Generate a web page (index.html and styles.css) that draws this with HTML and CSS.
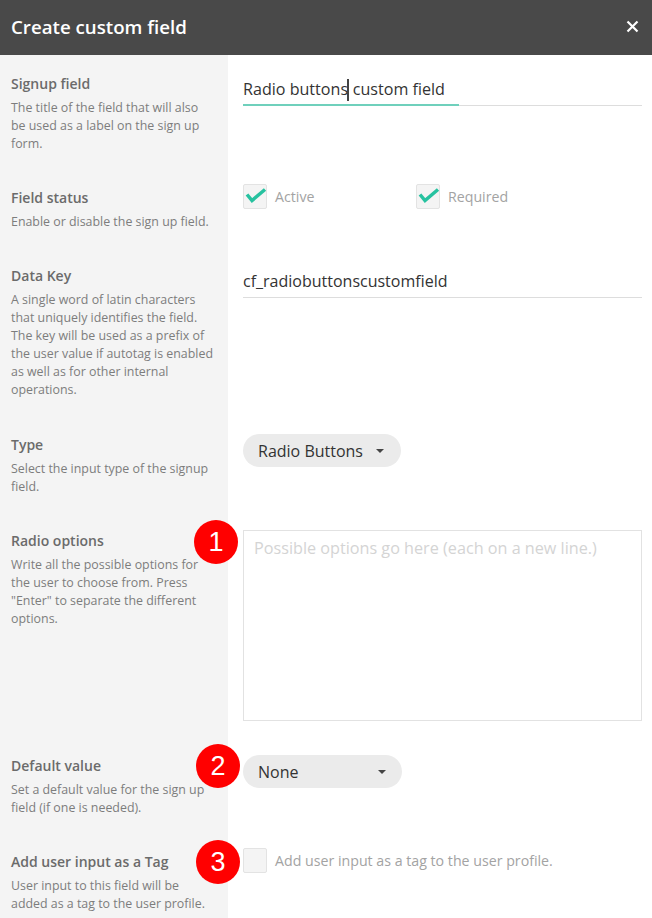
FILE: index.html
```html
<!DOCTYPE html>
<html lang="en">
<head>
    <meta charset="UTF-8">
    <meta name="viewport" content="width=device-width, initial-scale=1.0">
    <title>Create custom field</title>
    <link rel="stylesheet" href="styles.css">
</head>
<body>

<div class="dialog">
    <div class="dialog-header">
        <h1>Create custom field</h1>
        <svg class="close-icon" width="13" height="13" viewBox="0 0 13 13"><path d="M1.5 1.5l10 10M11.5 1.5l-10 10"/></svg>
    </div>

    <div class="row row-signup">
        <div class="info">
            <h2>Signup field</h2>
            <p>The title of the field that will also<br>be used as a label on the sign up form.</p>
        </div>
        <div class="control">
            <div class="text-input focused">Radio buttons<span class="caret"></span> custom field</div>
        </div>
    </div>

    <div class="row row-status">
        <div class="info">
            <h2>Field status</h2>
            <p>Enable or disable the sign up field.</p>
        </div>
        <div class="control checks">
            <label class="check check-active">
                <span class="box"><svg width="22" height="18" viewBox="0 0 22 18"><path d="M3 6.5l5 6L21 1.5"/></svg></span>
                Active
            </label>
            <label class="check">
                <span class="box"><svg width="22" height="18" viewBox="0 0 22 18"><path d="M3 6.5l5 6L21 1.5"/></svg></span>
                Required
            </label>
        </div>
    </div>

    <div class="row row-key">
        <div class="info">
            <h2>Data Key</h2>
            <p>A single word of latin characters that uniquely identifies the field. The key will be used as a prefix of the user value if autotag is enabled as well as for other internal operations.</p>
        </div>
        <div class="control">
            <div class="text-input">cf_radiobuttonscustomfield</div>
        </div>
    </div>

    <div class="row row-type">
        <div class="info">
            <h2>Type</h2>
            <p>Select the input type of the signup field.</p>
        </div>
        <div class="control">
            <div class="select select-type">Radio Buttons<span class="arrow"></span></div>
        </div>
    </div>

    <div class="row row-options">
        <div class="info">
            <h2>Radio options</h2>
            <p>Write all the possible options for the user to choose from. Press "Enter" to separate the different options.</p>
        </div>
        <div class="control">
            <div class="textarea">Possible options go here (each on a new line.)</div>
            <span class="badge badge-one">1</span>
        </div>
    </div>

    <div class="row row-default">
        <div class="info">
            <h2>Default value</h2>
            <p>Set a default value for the sign up field (if one is needed).</p>
        </div>
        <div class="control">
            <div class="select select-default">None<span class="arrow"></span></div>
            <span class="badge badge-two">2</span>
        </div>
    </div>

    <div class="row row-tag">
        <div class="info">
            <h2>Add user input as a Tag</h2>
            <p>User input to this field will be added as a tag to the user profile.</p>
        </div>
        <div class="control">
            <label class="check">
                <span class="box"></span>
                Add user input as a tag to the user profile.
            </label>
            <span class="badge badge-three">3</span>
        </div>
    </div>
</div>

</body>
</html>
```

FILE: styles.css
```css
html, body {
    margin: 0;
    padding: 0;
}
body {
    font-family: "Open Sans", "Noto Sans", sans-serif;
    background-color: #fff;
    color: #333;
}
.dialog {
    width: 652px;
    height: 918px;
    overflow: hidden;
}
.dialog-header {
    display: flex;
    align-items: center;
    justify-content: space-between;
    height: 55px;
    padding: 0 13px 2px 11px;
    box-sizing: border-box;
    background-color: #494949;
}
.dialog-header h1 {
    margin: 0;
    font-size: 18.7px;
    font-weight: 600;
    color: #fff;
}
.close-icon path {
    fill: none;
    stroke: #fff;
    stroke-width: 2.2;
}
.row {
    display: grid;
    grid-template-columns: 228px 1fr;
}
.info {
    padding: 20px 14px 16px 11px;
    background-color: #f4f4f4;
}
.row-key .info {
    padding-bottom: 17px;
}
.info h2 {
    margin: 0 0 6px;
    font-size: 14px;
    line-height: 18px;
    font-weight: 600;
    color: #6b6b6b;
}
.info p {
    margin: 0;
    font-size: 12.4px;
    line-height: 18px;
    color: #7d7d7d;
}
.control {
    position: relative;
    padding: 0 10px 0 15px;
}
.text-input {
    position: relative;
    height: 30px;
    margin-top: 20px;
    font-size: 16px;
    line-height: 29px;
    color: #333;
    border-bottom: 1px solid #ddd;
}
.text-input.focused {
    font-size: 16.1px;
}
.text-input.focused::after {
    content: "";
    position: absolute;
    left: 0;
    bottom: -1px;
    width: 216px;
    height: 2px;
    background-color: #6fd0bc;
}
.caret {
    display: inline-block;
    width: 1.5px;
    height: 22px;
    margin-left: -1px;
    vertical-align: -6px;
    background-color: #444;
}
.checks {
    display: flex;
}
.check {
    display: flex;
    align-items: center;
    gap: 8px;
    font-size: 14.2px;
    color: #a3a3a3;
}
.check-active {
    width: 173px;
}
.row-status .check {
    align-self: flex-start;
    margin-top: 15px;
}
.row-tag .check {
    margin-top: 15px;
}
.box {
    display: flex;
    align-items: center;
    justify-content: center;
    width: 24px;
    height: 25px;
    box-sizing: border-box;
    background-color: #f4f4f4;
    border: 1px solid #e3e3e3;
    border-radius: 2px;
}
.box svg {
    overflow: visible;
}
.box path {
    fill: none;
    stroke: #27c2a0;
    stroke-width: 3.5;
}
.select {
    display: flex;
    align-items: center;
    justify-content: space-between;
    height: 33px;
    margin-top: 18px;
    padding: 0 16px 0 15px;
    box-sizing: border-box;
    font-size: 16px;
    color: #333;
    background-color: #ebebeb;
    border-radius: 17px;
}
.select-type {
    width: 158px;
    padding-right: 17px;
}
.select-default {
    width: 159px;
}
.arrow {
    width: 0;
    height: 0;
    border-left: 4.5px solid transparent;
    border-right: 4.5px solid transparent;
    border-top: 4.5px solid #444;
}
.textarea {
    height: 191px;
    margin: 18px 0 16px;
    padding: 6px 10px;
    box-sizing: border-box;
    font-size: 16.2px;
    line-height: 22px;
    color: #d4d4d4;
    border: 1px solid #e2e2e2;
}
/* numbered callouts sit over the edge of the sidebar */
.badge {
    position: absolute;
    width: 44px;
    height: 44px;
    border-radius: 50%;
    background-color: #f00;
    color: #fff;
    font-family: "Liberation Sans", Arial, sans-serif;
    font-size: 27px;
    line-height: 44px;
    text-align: center;
}
.badge-one {
    left: -34px;
    top: 8px;
}
.badge-two {
    left: -32px;
    top: 7px;
}
.badge-three {
    left: -32px;
    top: 7px;
}
```
